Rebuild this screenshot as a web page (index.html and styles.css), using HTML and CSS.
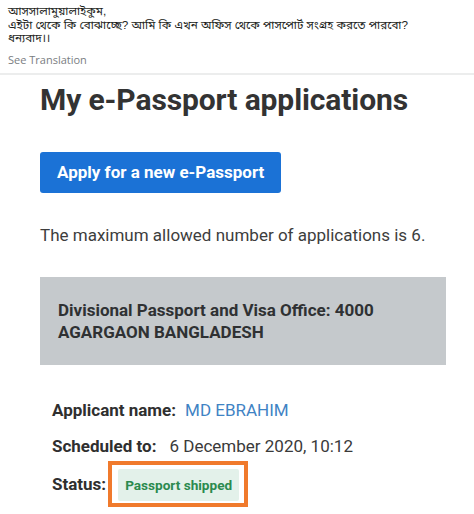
FILE: index.html
```html
<!DOCTYPE html>
<html lang="en">
<head>
<meta charset="utf-8">
<link rel="stylesheet" href="styles.css">
</head>
<body>
<div class="post">
  <p class="post-text" lang="bn">আসসালামুয়ালাইকুম,<br>এইটা থেকে কি বোঝাচ্ছে? আমি কি এখন অফিস থেকে পাসপোর্ট সংগ্রহ করতে পারবো?<br>ধন্যবাদ।।</p>
  <div class="see-translation">See Translation</div>
</div>
<div class="divider"></div>
<main class="page">
  <h1 class="title">My e-Passport applications</h1>
  <button class="apply-btn" type="button">Apply for a new e-Passport</button>
  <p class="limit">The maximum allowed number of applications is 6.</p>
  <div class="office">Divisional Passport and Visa Office: 4000<br>AGARGAON BANGLADESH</div>
  <div class="details">
    <div class="row"><span class="label">Applicant name:</span><span class="value name">MD EBRAHIM</span></div>
    <div class="row"><span class="label">Scheduled to:</span><span class="value date">6 December 2020, 10:12</span></div>
    <div class="row status-row"><span class="label">Status:</span><span class="highlight"><span class="badge">Passport shipped</span></span></div>
  </div>
</main>
</body>
</html>
```

FILE: styles.css
```css
* { box-sizing: border-box; }
html, body { margin: 0; padding: 0; background: #fff; }
body { font-family: Roboto, "Liberation Sans", sans-serif; color: #333; width: 474px; height: 514px; overflow: hidden; }

.post { padding: 4px 8px 0 8px; }
.post-text { margin: 0; font-family: "Liberation Sans", "Noto Sans Bengali", sans-serif; font-size: 11.7px; line-height: 13.5px; color: #1c1e21; }
.see-translation { margin-top: 8px; font-family: "Open Sans", "Noto Sans", sans-serif; font-size: 11px; line-height: 14px; color: #7a7d82; }

.divider { margin-top: 6px; height: 2px; background: #eceded; }

.page { padding: 0 28px 0 40px; display: flex; flex-direction: column; align-items: flex-start; }
.title { margin: 7px 0 0 0; font-size: 30px; line-height: 36px; font-weight: 700; color: #333; letter-spacing: -0.1px; }

.apply-btn { margin-top: 34px; height: 41px; padding: 0 17px; border: 0; border-radius: 3px; background: #1b72d6; color: #fff; font-family: Roboto, "Liberation Sans", sans-serif; font-size: 17px; font-weight: 700; }

.limit { margin: 32px 0 0 0; font-size: 17px; line-height: 20px; color: #3d3d3d; }

.office { margin-top: 32px; align-self: stretch; background: #c5c9cc; padding: 22px 18px; font-size: 17px; line-height: 22px; font-weight: 700; color: #2f3133; }

.details { margin-top: 35px; padding-left: 12px; display: flex; flex-direction: column; gap: 16px; }
.row { display: flex; align-items: center; font-size: 17px; line-height: 20px; height: 20px; }
.label { font-weight: 700; color: #2f2f2f; }
.value { color: #3a3a3a; }
.name { margin-left: 9px; color: #3f83c4; }
.date { margin-left: 13px; }
.status-row { height: 46px; margin-top: -11px; }
.highlight { margin-left: 2px; border: 4px solid #f07a2c; padding: 4px 5px 2px 6px; display: inline-flex; }
.badge { background: #e3f1ea; color: #2b8a4f; font-size: 13.6px; font-weight: 700; line-height: 32px; height: 32px; padding: 0 7px; border-radius: 2px; }
```
